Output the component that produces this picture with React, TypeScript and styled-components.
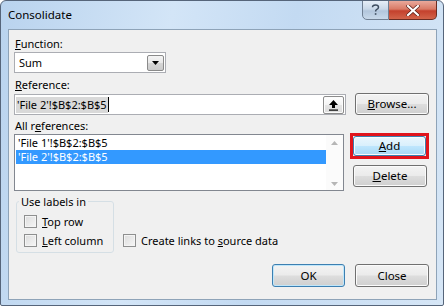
import styled, { createGlobalStyle, css } from 'styled-components';

const GlobalStyle = createGlobalStyle`
  html, body {
    margin: 0;
    padding: 0;
    background: #ffffff;
  }
  body {
    font-family: "Segoe UI", "Noto Sans", "Liberation Sans", sans-serif;
    font-size: 11px;
    color: #000;
  }
  * {
    box-sizing: border-box;
  }
`;

const Window = styled.div`
  width: 444px;
  height: 306px;
  border: 1px solid #56657a;
  border-radius: 6px 6px 2px 2px;
  background: linear-gradient(100deg, #b9d3ee 0%, #d3e5f7 35%, #c3daf2 60%, #d6e6f6 100%);
  display: flex;
  flex-direction: column;
  overflow: hidden;
`;

const TitleBar = styled.div`
  height: 28px;
  display: flex;
  align-items: flex-start;
  padding-left: 7px;
  padding-right: 6px;
`;

const Title = styled.div`
  margin-top: 6px;
  font-size: 11.5px;
  line-height: 16px;
  color: #000;
`;

const CaptionButtons = styled.div`
  margin-left: auto;
  display: flex;
  margin-top: -1px;
`;

const CaptionButton = styled.div<{ $close?: boolean }>`
  height: 20px;
  display: flex;
  align-items: center;
  justify-content: center;
  border: 1px solid #6f7f92;
  ${(p) =>
    p.$close
      ? css`
          width: 48px;
          border-left: none;
          border-color: #6a2c22;
          border-radius: 0 0 5px 0;
          background: linear-gradient(180deg, #e9a99b 0%, #d97a66 45%, #c4412d 55%, #d2644a 100%);
        `
      : css`
          width: 27px;
          border-radius: 0 0 0 5px;
          background: linear-gradient(180deg, #e6eef7 0%, #c9d8e8 45%, #b2c6dc 55%, #c8d9ea 100%);
        `}
`;

const Client = styled.div`
  margin: 0 6px 0 7px;
  height: 271px;
  border: 1px solid #8ea3b8;
  background: #f0f0f0;
  padding: 6px 7px 0 5px;
  display: flex;
  flex-direction: column;
`;

const U = styled.span`
  text-decoration: underline;
  text-underline-offset: 1px;
`;

const FieldLabel = styled.div<{ $top?: number }>`
  height: 16px;
  line-height: 16px;
  margin-top: ${(p) => p.$top ?? 0}px;
  padding-left: 1px;
`;

const Select = styled.div`
  width: 152px;
  height: 21px;
  border: 1px solid #abadb3;
  background: #fff;
  display: flex;
  align-items: center;
  padding: 0 1px 0 4px;
`;

const SelectText = styled.span`
  flex: 1;
`;

const DropButton = styled.div`
  width: 17px;
  height: 16px;
  border: 1px solid #8a8a8a;
  border-radius: 2px;
  background: linear-gradient(180deg, #f4f4f4 0%, #e8e8e8 50%, #d6d6d6 51%, #cbcbcb 100%);
  display: flex;
  align-items: center;
  justify-content: center;
`;

const Row = styled.div<{ $top?: number }>`
  display: flex;
  align-items: flex-start;
  gap: 9px;
  margin-top: ${(p) => p.$top ?? 0}px;
`;

const RefInput = styled.div`
  width: 332px;
  height: 21px;
  margin-top: 1px;
  border: 1px solid #abadb3;
  background: #fff;
  display: flex;
  align-items: center;
  padding: 0 0 0 1px;
`;

const Selected = styled.span`
  background: #d9d9d9;
  line-height: 16px;
  padding: 0 1px;
`;

const Caret = styled.span`
  width: 1px;
  height: 15px;
  background: #000;
`;

const CollapseButton = styled.div`
  margin-left: auto;
  margin-right: 1px;
  width: 21px;
  height: 18px;
  border: 1px solid #8c8c8c;
  border-radius: 2px;
  background: linear-gradient(180deg, #ffffff 0%, #f3f3f3 50%, #e4e4e4 51%, #dcdcdc 100%);
  box-shadow: inset 0 0 0 1px #fbfbfb;
  display: flex;
  align-items: center;
  justify-content: center;
`;

const Button = styled.div<{ $width?: number; $height?: number; $top?: number; $blue?: boolean; $default?: boolean }>`
  width: ${(p) => p.$width ?? 74}px;
  height: ${(p) => p.$height ?? 22}px;
  margin-top: ${(p) => p.$top ?? 0}px;
  border: 1px solid #707070;
  border-radius: 3px;
  background: linear-gradient(180deg, #f3f3f3 0%, #ebebeb 48%, #dddddd 52%, #cfcfcf 100%);
  box-shadow: inset 0 0 0 1px #fbfbfb;
  display: flex;
  align-items: center;
  justify-content: center;
  font-size: 11.5px;
  line-height: 16px;
  ${(p) =>
    p.$blue &&
    css`
      border-color: #3c7fb1;
      background: linear-gradient(180deg, #eaf6fd 0%, #d9f0fc 48%, #bee6fd 52%, #a7d9f5 100%);
    `}
  ${(p) =>
    p.$default &&
    css`
      border-color: #3c7fb1;
      box-shadow: inset 0 0 0 1px #bfe6fa;
    `}
`;

// red highlight drawn around the Add button in the screenshot
const MarkFrame = styled.div`
  width: 79px;
  height: 26px;
  margin: -1px 0 0 -3px;
  border: 3px solid #e0141c;
`;

const List = styled.div`
  width: 332px;
  height: 57px;
  border: 1px solid #828790;
  background: #fff;
  display: flex;
`;

const Items = styled.div`
  flex: 1;
  padding: 1px 0 0 1px;
`;

const Item = styled.div<{ $selected?: boolean }>`
  height: 14px;
  line-height: 14px;
  padding-left: 2px;
  white-space: nowrap;
  overflow: hidden;
  ${(p) =>
    p.$selected &&
    css`
      background: #3399ff;
      color: #fff;
    `}
`;

const ScrollBar = styled.div`
  width: 17px;
  background: #fbfbfb;
  display: flex;
  flex-direction: column;
  justify-content: space-between;
  align-items: center;
  padding: 6px 0 4px;
`;

const ButtonColumn = styled.div`
  display: flex;
  flex-direction: column;
`;

const BottomRow = styled.div`
  display: flex;
  align-items: flex-start;
  margin-top: 3px;
`;

const GroupBox = styled.fieldset`
  width: 98px;
  height: 59px;
  margin: 0 0 0 2px;
  padding: 0 0 0 7px;
  border: 1px solid #d5dfe5;
  border-radius: 3px;
`;

const Legend = styled.legend`
  margin-left: -5px;
  padding: 0 2px;
  line-height: 15px;
  color: #000;
`;

const CheckItem = styled.label<{ $top?: number; $left?: number }>`
  display: flex;
  align-items: center;
  gap: 4px;
  height: 19px;
  margin-top: ${(p) => p.$top ?? 0}px;
  margin-left: ${(p) => p.$left ?? 0}px;
  white-space: nowrap;
`;

const Box = styled.span`
  width: 13px;
  height: 13px;
  border: 1px solid #8e8f8f;
  background: linear-gradient(135deg, #dcdcdc 0%, #f6f6f6 100%);
  box-shadow: inset 0 0 0 1px #f4f4f4;
  margin-right: 1px;
`;

const Footer = styled.div`
  display: flex;
  justify-content: flex-end;
  gap: 10px;
  margin-top: 11px;
`;

function App() {
  return (
    <>
      <GlobalStyle />
      <Window>
        <TitleBar>
          <Title>Consolidate</Title>
          <CaptionButtons>
            <CaptionButton>
              <svg width="9" height="12" viewBox="0 0 9 12">
                <path d="M1.5 3.2 Q1.5 1 4.5 1 Q7.5 1 7.5 3.2 Q7.5 4.8 5.5 5.6 Q4.6 6 4.6 7.6" fill="none" stroke="#3d4c5e" strokeWidth="1.5" />
                <rect x="3.8" y="9.2" width="1.6" height="1.6" fill="#3d4c5e" />
              </svg>
            </CaptionButton>
            <CaptionButton $close>
              <svg width="14" height="11" viewBox="0 0 14 11">
                <path d="M2 1 L12 10 M12 1 L2 10" stroke="#5a2018" strokeWidth="3.6" strokeLinecap="square" />
                <path d="M2 1 L12 10 M12 1 L2 10" stroke="#ffffff" strokeWidth="2.2" strokeLinecap="square" />
              </svg>
            </CaptionButton>
          </CaptionButtons>
        </TitleBar>
        <Client>
          <FieldLabel>
            <U>F</U>unction:
          </FieldLabel>
          <Select>
            <SelectText>Sum</SelectText>
            <DropButton>
              <svg width="7" height="4" viewBox="0 0 7 4">
                <path d="M0 0 H7 L3.5 4 Z" fill="#000" />
              </svg>
            </DropButton>
          </Select>
          <FieldLabel $top={4}>
            <U>R</U>eference:
          </FieldLabel>
          <Row>
            <RefInput>
              <Selected>'File 2'!$B$2:$B$5</Selected>
              <Caret />
              <CollapseButton>
                <svg width="11" height="12" viewBox="0 0 11 12">
                  <path d="M5.5 1 L10 6 H7 V9 H4 V6 H1 Z" fill="#000" />
                  <rect x="1" y="10.5" width="9" height="1.2" fill="#000" />
                </svg>
              </CollapseButton>
            </RefInput>
            <Button>
              <U>B</U>rowse...
            </Button>
          </Row>
          <FieldLabel $top={3}>
            All r<U>e</U>ferences:
          </FieldLabel>
          <Row>
            <List>
              <Items>
                <Item>'File 1'!$B$2:$B$5</Item>
                <Item $selected>'File 2'!$B$2:$B$5</Item>
              </Items>
              <ScrollBar>
                <svg width="7" height="4" viewBox="0 0 7 4">
                  <path d="M0 4 L3.5 0 L7 4 Z" fill="#b6b6b6" />
                </svg>
                <svg width="7" height="4" viewBox="0 0 7 4">
                  <path d="M0 0 H7 L3.5 4 Z" fill="#b6b6b6" />
                </svg>
              </ScrollBar>
            </List>
            <ButtonColumn>
              <MarkFrame>
                <Button $width={73} $height={20} $blue>
                  <U>A</U>dd
                </Button>
              </MarkFrame>
              <Button $top={6}>
                <U>D</U>elete
              </Button>
            </ButtonColumn>
          </Row>
          <BottomRow>
            <GroupBox>
              <Legend>Use labels in</Legend>
              <CheckItem $top={3}>
                <Box />
                <span>
                  <U>T</U>op row
                </span>
              </CheckItem>
              <CheckItem>
                <Box />
                <span>
                  <U>L</U>eft column
                </span>
              </CheckItem>
            </GroupBox>
            <CheckItem $top={37} $left={9}>
              <Box />
              <span>
                Create links to <U>s</U>ource data
              </span>
            </CheckItem>
          </BottomRow>
          <Footer>
            <Button $width={73} $height={23} $default>
              OK
            </Button>
            <Button $height={23}>Close</Button>
          </Footer>
        </Client>
      </Window>
    </>
  );
}

export default App;
